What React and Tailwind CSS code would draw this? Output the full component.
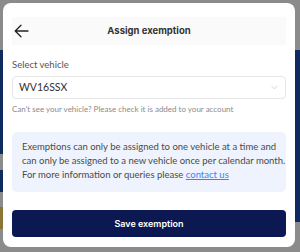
import { ChevronDown } from "lucide-react";

function Backdrop() {
  return (
    <div className="grid grid-cols-2 h-full">
      <div className="flex flex-col">
        <div className="h-[50px] bg-[#8b8b8b]" />
        <div className="h-[104px] bg-[#0e2a5e]" />
        <div className="h-[16px] bg-[#8b8b8b]" />
        <div className="h-[22px] bg-[#0e2a5e]" />
        <div className="h-[15px] bg-[#8b8b8b]" />
        <div className="h-[22px] bg-[#8a7436]" />
        <div className="flex-1 bg-[#8b8b8b]" />
      </div>
      <div className="flex flex-col">
        <div className="h-[50px] bg-[#8b8b8b]" />
        <div className="h-[172px] bg-[#0e2a5e]" />
        <div className="flex-1 bg-[#8b8b8b]" />
      </div>
    </div>
  );
}

export default function App() {
  return (
    <div
      className="relative w-[300px] h-[252px] overflow-hidden"
      style={{ fontFamily: "Lato, 'Liberation Sans', sans-serif" }}
    >
      <Backdrop />
      <div className="absolute left-[3px] top-[3px] w-[292px] h-[244px] bg-white rounded-[8px] px-[9px] pt-[14px]">
        {/* header */}
        <div className="relative flex items-center justify-center h-[28px] bg-[#fafafa]">
          <svg
            className="absolute left-[2px] top-[7px]"
            width="15"
            height="14"
            viewBox="0 0 15 14"
            fill="none"
            stroke="#222"
            strokeWidth="1.3"
            strokeLinecap="round"
            strokeLinejoin="round"
          >
            <path d="M14 7H1.5M7 1.2L1.2 7L7 12.8" />
          </svg>
          <span
            className="text-[9.5px] font-bold text-[#333]"
            style={{ fontFamily: "Inter, 'Liberation Sans', sans-serif" }}
          >
            Assign exemption
          </span>
        </div>

        {/* vehicle select */}
        <div className="mt-[13px] text-[9.5px] text-[#555] leading-[14px]">Select vehicle</div>
        <div className="mt-[4px] h-[23px] border border-[#e6e6e6] rounded-[4px] flex items-center justify-between pl-[6px] pr-[5px]">
          <span className="text-[10.5px] text-[#333]">WV16SSX</span>
          <ChevronDown size={11} color="#c4c4c4" strokeWidth={1.5} />
        </div>
        <div className="mt-[4px] text-[8px] text-[#8a8a8a] leading-[12px] whitespace-nowrap">
          Can't see your vehicle? Please check it is added to your account
        </div>

        {/* info box */}
        <div className="mt-[17px] h-[60px] bg-[#eef3fd] rounded-[5px] px-[10px] pt-[8px] text-[9.5px] leading-[14px] text-[#4a4a4a] whitespace-nowrap">
          <div>Exemptions can only be assigned to one vehicle at a time and</div>
          <div>can only be assigned to a new vehicle once per calendar month.</div>
          <div>
            For more information or queries please{" "}
            <a href="#" className="text-[#3b82f6] underline">
              contact us
            </a>
          </div>
        </div>

        {/* save */}
        <button
          className="mt-[18px] w-full h-[27px] bg-[#0c1852] rounded-[4px] text-white text-[9px] font-semibold"
          style={{ fontFamily: "Inter, 'Liberation Sans', sans-serif" }}
        >
          Save exemption
        </button>
      </div>
    </div>
  );
}
